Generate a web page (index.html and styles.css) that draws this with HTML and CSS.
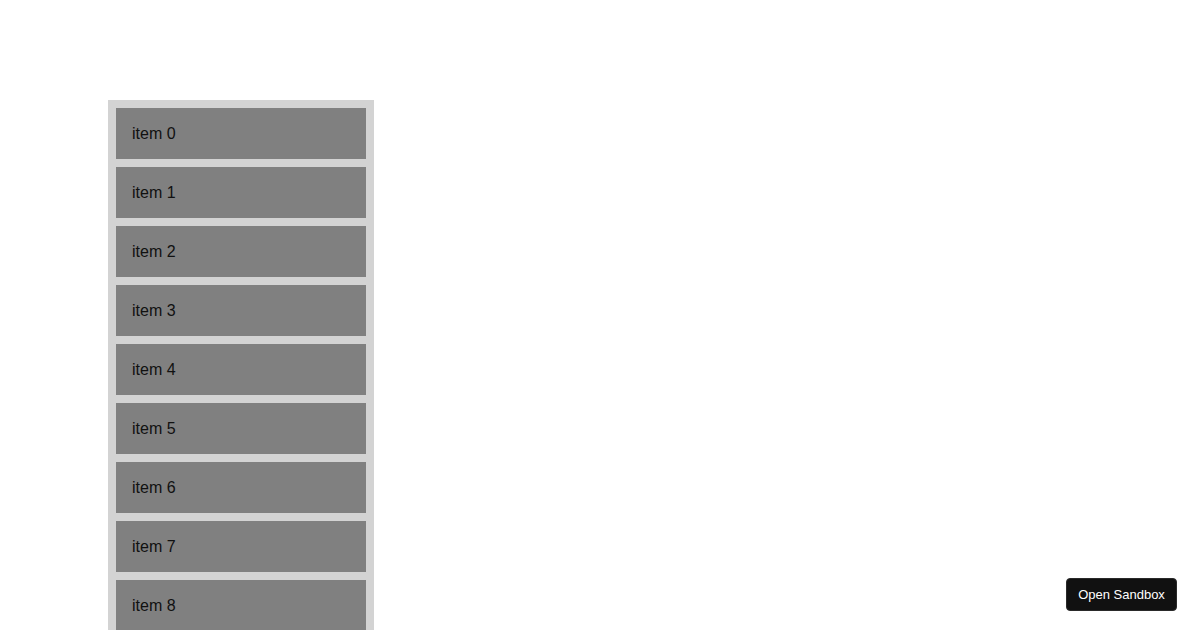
FILE: index.html
```html
<!DOCTYPE html>
<html>
<head>
<meta charset="utf-8">
<link rel="stylesheet" href="styles.css">
</head>
<body>
<main class="page">
  <div class="list">
    <div class="item">item 0</div>
    <div class="item">item 1</div>
    <div class="item">item 2</div>
    <div class="item">item 3</div>
    <div class="item">item 4</div>
    <div class="item">item 5</div>
    <div class="item">item 6</div>
    <div class="item">item 7</div>
    <div class="item">item 8</div>
    <div class="item">item 9</div>
  </div>
</main>
<button class="sandbox">Open Sandbox</button>
</body>
</html>
```
FILE: styles.css
```css
html, body {
  margin: 0;
  padding: 0;
  background: #fff;
  height: 630px;
  overflow: hidden;
  font-family: "Liberation Sans", Arial, sans-serif;
}
.page {
  padding: 100px 0 0 108px;
}
.list {
  width: 250px;
  padding: 8px;
  background: #d3d3d3;
  display: flex;
  flex-direction: column;
  gap: 8px;
}
.item {
  height: 51px;
  background: #808080;
  display: flex;
  align-items: center;
  padding-left: 16px;
  font-size: 16px;
  color: #111;
}
.sandbox {
  position: fixed;
  right: 23px;
  bottom: 19px;
  width: 111px;
  height: 33px;
  background: #111;
  color: #fff;
  border: 1px solid #2a2a2a;
  border-radius: 4px;
  font-family: "Liberation Sans", Arial, sans-serif;
  font-size: 13px;
  padding: 0;
}
```
